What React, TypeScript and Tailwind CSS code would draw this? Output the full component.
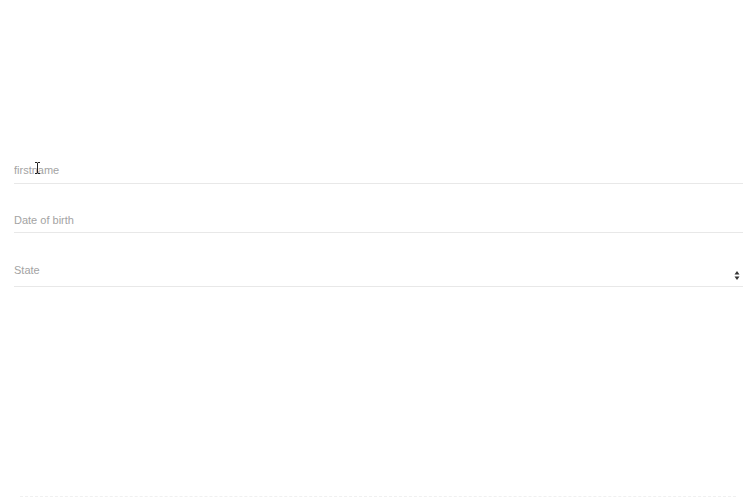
import React from 'react';

const font = { fontFamily: '"Liberation Sans", Arial, sans-serif' };

const TextField = ({ placeholder, cursor }: { placeholder: string, cursor?: boolean }) => (
  <div className="relative">
    <input
      type="text"
      placeholder={placeholder}
      className="w-full h-[26px] text-[11px] text-gray-700 placeholder:text-[#a3a3a3] bg-transparent border-b border-[#e8e8e8] outline-none"
    />
    {cursor && (
      <svg className="absolute left-[20px] top-[5px] pointer-events-none" width="7" height="12" viewBox="0 0 7 12">
        <path d="M1 0.5h2l0.5 0.5 0.5-0.5h2M3.5 1v10M1 11.5h2l0.5-0.5 0.5 0.5h2" stroke="#222" strokeWidth="1" fill="none" />
      </svg>
    )}
  </div>
);

export default function App() {
  return (
    <div className="w-[756px] h-[501px] bg-white flex flex-col" style={font}>
      <form className="flex flex-col gap-[23px] px-[14px] pt-[157px] pr-[13px]">
        <TextField placeholder="firstname" cursor />
        <TextField placeholder="Date of birth" />
        <div className="relative">
          <select
            defaultValue=""
            className="w-full h-[31px] pb-[2px] text-[11px] text-[#a3a3a3] bg-transparent border-b border-[#e8e8e8] outline-none appearance-none"
          >
            <option value="" disabled>State</option>
            <option>Alabama</option>
            <option>Alaska</option>
            <option>Arizona</option>
          </select>
          <svg className="absolute right-[3px] top-[15px] pointer-events-none" width="6" height="9" viewBox="0 0 6 9">
            <path d="M3 0L5.5 3.5H0.5Z" fill="#333" />
            <path d="M3 9L5.5 5.5H0.5Z" fill="#333" />
          </svg>
        </div>
      </form>
      <div className="flex-1" />
      <div className="mx-[20px] mb-[4px] border-b border-dashed border-[#f0f0f0]" />
    </div>
  );
}
